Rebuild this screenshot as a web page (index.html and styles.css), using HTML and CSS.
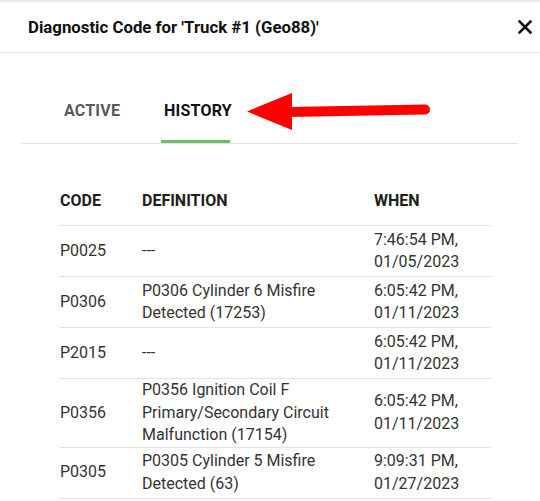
FILE: index.html
```html
<!DOCTYPE html>
<html lang="en">
<head>
<meta charset="utf-8">
<title>Diagnostic Code</title>
<link rel="stylesheet" href="styles.css">
</head>
<body>
<div class="dialog">
  <header class="dlg-header">
    <h1 class="dlg-title">Diagnostic Code for 'Truck #1 (Geo88)'</h1>
    <button class="close-btn" aria-label="Close">
      <svg width="14" height="14" viewBox="0 0 14 14"><path d="M1.5 1.5 L12.5 12.5 M12.5 1.5 L1.5 12.5" stroke="#111" stroke-width="2.6" stroke-linecap="square"/></svg>
    </button>
  </header>

  <nav class="tabs">
    <span class="tab">ACTIVE</span>
    <span class="tab tab-active">HISTORY</span>
  </nav>

  <svg class="annot-arrow" width="540" height="160" viewBox="0 0 540 160">
    <line x1="288" y1="112" x2="425" y2="109.5" stroke="#ff0000" stroke-width="10" stroke-linecap="round"/>
    <polygon points="247,111.5 292,93 292,130" fill="#ff0000"/>
  </svg>

  <table class="codes">
    <colgroup>
      <col class="c-code"><col class="c-def"><col class="c-when">
    </colgroup>
    <thead>
      <tr><th>CODE</th><th>DEFINITION</th><th>WHEN</th></tr>
    </thead>
    <tbody>
      <tr><td>P0025</td><td>---</td><td>7:46:54 PM, 01/05/2023</td></tr>
      <tr><td>P0306</td><td>P0306 Cylinder 6 Misfire Detected (17253)</td><td>6:05:42 PM, 01/11/2023</td></tr>
      <tr><td>P2015</td><td>---</td><td>6:05:42 PM, 01/11/2023</td></tr>
      <tr><td>P0356</td><td>P0356 Ignition Coil F Primary/Secondary Circuit Malfunction (17154)</td><td>6:05:42 PM, 01/11/2023</td></tr>
      <tr><td>P0305</td><td>P0305 Cylinder 5 Misfire Detected (63)</td><td>9:09:31 PM, 01/27/2023</td></tr>
    </tbody>
  </table>
</div>
</body>
</html>
```
FILE: styles.css
```css
html, body {
  margin: 0;
  padding: 0;
  background: #fff;
}
body {
  font-family: Roboto, "Liberation Sans", Arial, sans-serif;
  color: #222;
  width: 540px;
  height: 501px;
  overflow: hidden;
}
.dialog {
  position: relative;
}
.dlg-header {
  height: 53px;
  box-sizing: border-box;
  display: flex;
  align-items: center;
  justify-content: space-between;
  padding: 2px 8px 0 28px;
  border-bottom: 1px solid #e3e3e3;
  background: linear-gradient(#d6d6d6 0, #ececec 1px, #fafafa 3px, #fff 4px);
}
.dlg-title {
  margin: 0;
  font-size: 16.8px;
  font-weight: 700;
  color: #111;
  line-height: 20px;
}
.close-btn {
  border: 0;
  background: none;
  padding: 0;
  width: 14px;
  height: 14px;
  display: flex;
}
.tabs {
  display: flex;
  gap: 44px;
  margin: 0 22px 0 21px;
  padding: 48px 0 0 43px;
  border-bottom: 1px solid #e3e3e3;
}
.tab {
  position: relative;
  font-size: 16px;
  font-weight: 700;
  letter-spacing: 0.2px;
  line-height: 20px;
  padding-bottom: 22px;
  color: #5a5a5a;
}
.tab-active {
  color: #111;
}
.tab-active::after {
  content: "";
  position: absolute;
  left: -3px;
  right: 2px;
  bottom: 0;
  height: 3px;
  background: #6abf69;
}
.annot-arrow {
  position: absolute;
  left: 0;
  top: 0;
  pointer-events: none;
}
.codes {
  margin: 33px 0 0 59px;
  width: 432px;
  border-collapse: collapse;
  table-layout: fixed;
  font-size: 16px;
}
.c-code { width: 82px; }
.c-def { width: 232px; }
.c-when { width: 118px; }
.codes th {
  text-align: left;
  font-weight: 700;
  color: #1e1e1e;
  height: 48px;
  padding: 0 0 0 1px;
  vertical-align: middle;
  border-bottom: 1px solid #e3e3e3;
  line-height: 22px;
}
.codes td {
  height: 50px;
  padding: 0 16px 0 1px;
  vertical-align: middle;
  line-height: 22.5px;
  color: #333;
  border-bottom: 1px solid #e3e3e3;
}
```
